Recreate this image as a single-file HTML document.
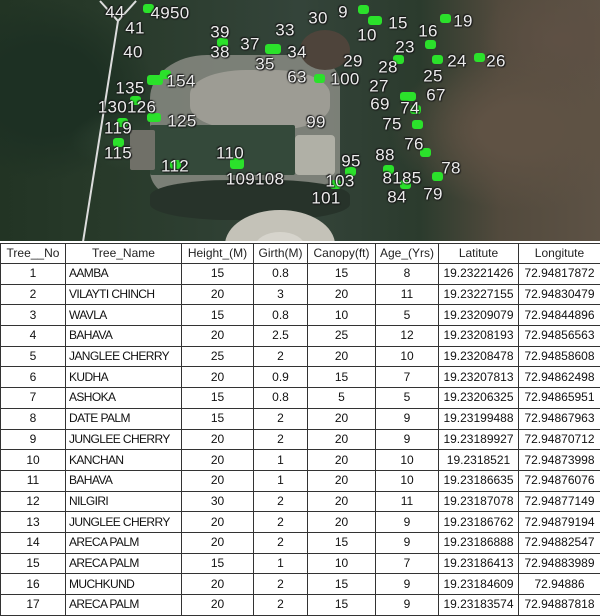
<!DOCTYPE html>
<html><head><meta charset="utf-8"><style>
body{margin:0;width:600px;height:600px;overflow:hidden;background:#fff;font-family:"Liberation Sans",sans-serif}
#map{position:absolute;left:0;top:0;width:600px;height:241px;overflow:hidden;
background:
radial-gradient(ellipse 60px 30px at 130px 140px,#2e4232,transparent),
radial-gradient(ellipse 110px 90px at 45px 90px,#1d3023 50%,transparent 100%),
radial-gradient(ellipse 130px 80px at 520px 130px,#5f5244 30%,transparent 100%),
radial-gradient(ellipse 80px 60px at 560px 40px,#5e5044,transparent),
linear-gradient(90deg,#223424 0,#283a2a 110px,#34443a 300px,#2b3b2d 420px,#524a3d 500px,#5d5245 600px);}
.d{position:absolute;border-radius:40%}
.l{position:absolute;color:#ececec;font-size:17px;line-height:17px;letter-spacing:.3px;transform:translate(-50%,-50%);white-space:nowrap;
text-shadow:0 0 2px #000,1px 1px 1px #222,-1px -1px 1px #222}
.g{position:absolute;background:#2be12b;width:11px;height:9px;border-radius:3px}
.r{position:absolute;height:2px;background:#ddd;transform-origin:0 50%}
table{position:absolute;top:243px;left:0;border-collapse:collapse;table-layout:fixed;width:600px;font-size:12px;color:#111}
td{border:1px solid #333;height:19.7px;padding:0;text-align:center;white-space:nowrap;overflow:hidden;line-height:19px}
td.n{text-align:left;letter-spacing:-.6px;padding-left:3px}
tr.h td{height:18px;color:#222}
</style></head><body>
<div id="map">
<div class="d" style="left:150px;top:55px;width:190px;height:145px;background:#8e9088;border-radius:30% 20% 10% 20%;opacity:.8"></div>
<div class="d" style="left:190px;top:70px;width:140px;height:60px;background:#9d9c94"></div>
<div class="d" style="left:150px;top:125px;width:145px;height:50px;background:#34493a;border-radius:2px"></div>
<div class="d" style="left:295px;top:135px;width:40px;height:40px;background:#b0b0a6;border-radius:4px"></div>
<div class="d" style="left:300px;top:30px;width:50px;height:40px;background:#4e443b;border-radius:50%"></div>
<div class="d" style="left:130px;top:130px;width:25px;height:40px;background:#707068;border-radius:2px"></div>
<div class="d" style="left:150px;top:180px;width:200px;height:40px;background:#27332a;border-radius:40%"></div>
<div class="d" style="left:225px;top:210px;width:110px;height:70px;background:#c4c2b8;border-radius:50%"></div>
<div class="d" style="left:255px;top:232px;width:50px;height:30px;background:#d6d4cc;border-radius:50%"></div>
<div class="r" style="left:118px;top:20px;width:223px;transform:rotate(99deg)"></div>
<div class="r" style="left:100px;top:0;width:27px;transform:rotate(48deg)"></div>
<div class="r" style="left:118px;top:20px;width:27px;transform:rotate(-48deg)"></div>
<div class="g" style="left:143px;top:4px"></div><div class="g" style="left:147px;top:75px;width:16px;height:10px"></div>
<div class="g" style="left:160px;top:70px"></div><div class="g" style="left:130px;top:96px"></div>
<div class="g" style="left:147px;top:113px;width:14px"></div><div class="g" style="left:113px;top:138px"></div>
<div class="g" style="left:117px;top:118px"></div><div class="g" style="left:230px;top:158px;width:14px;height:11px"></div>
<div class="g" style="left:170px;top:160px"></div><div class="g" style="left:265px;top:44px;width:16px;height:10px"></div>
<div class="g" style="left:217px;top:38px"></div><div class="g" style="left:314px;top:74px"></div>
<div class="g" style="left:358px;top:5px"></div><div class="g" style="left:368px;top:16px;width:14px"></div>
<div class="g" style="left:440px;top:14px"></div><div class="g" style="left:425px;top:40px"></div>
<div class="g" style="left:432px;top:55px"></div><div class="g" style="left:474px;top:53px"></div>
<div class="g" style="left:400px;top:92px;width:16px"></div><div class="g" style="left:412px;top:120px"></div>
<div class="g" style="left:420px;top:148px"></div><div class="g" style="left:383px;top:165px"></div>
<div class="g" style="left:432px;top:172px"></div><div class="g" style="left:400px;top:180px"></div>
<div class="g" style="left:330px;top:180px"></div><div class="g" style="left:345px;top:167px"></div>
<div class="g" style="left:393px;top:55px"></div><div class="g" style="left:410px;top:105px"></div>
<span class="l" style="left:115px;top:12px">44</span><span class="l" style="left:170px;top:13px">4950</span>
<span class="l" style="left:135px;top:28px">41</span><span class="l" style="left:133px;top:52px">40</span>
<span class="l" style="left:220px;top:32px">39</span><span class="l" style="left:220px;top:52px">38</span>
<span class="l" style="left:250px;top:44px">37</span><span class="l" style="left:285px;top:30px">33</span>
<span class="l" style="left:297px;top:52px">34</span><span class="l" style="left:265px;top:64px">35</span>
<span class="l" style="left:297px;top:77px">63</span><span class="l" style="left:130px;top:88px">135</span>
<span class="l" style="left:181px;top:81px">154</span><span class="l" style="left:127px;top:107px">130126</span>
<span class="l" style="left:182px;top:121px">125</span><span class="l" style="left:118px;top:128px">119</span>
<span class="l" style="left:118px;top:153px">115</span><span class="l" style="left:230px;top:153px">110</span>
<span class="l" style="left:175px;top:166px">112</span><span class="l" style="left:255px;top:179px">109108</span>
<span class="l" style="left:316px;top:122px">99</span>
<span class="l" style="left:318px;top:18px">30</span><span class="l" style="left:343px;top:12px">9</span>
<span class="l" style="left:367px;top:35px">10</span><span class="l" style="left:398px;top:23px">15</span>
<span class="l" style="left:428px;top:31px">16</span><span class="l" style="left:463px;top:21px">19</span>
<span class="l" style="left:405px;top:47px">23</span><span class="l" style="left:353px;top:61px">29</span>
<span class="l" style="left:388px;top:67px">28</span><span class="l" style="left:457px;top:61px">24</span>
<span class="l" style="left:496px;top:61px">26</span><span class="l" style="left:345px;top:79px">100</span>
<span class="l" style="left:379px;top:86px">27</span><span class="l" style="left:433px;top:76px">25</span>
<span class="l" style="left:436px;top:95px">67</span><span class="l" style="left:380px;top:104px">69</span>
<span class="l" style="left:410px;top:108px">74</span><span class="l" style="left:392px;top:124px">75</span>
<span class="l" style="left:414px;top:144px">76</span><span class="l" style="left:385px;top:155px">88</span>
<span class="l" style="left:351px;top:161px">95</span><span class="l" style="left:451px;top:168px">78</span>
<span class="l" style="left:402px;top:178px">8185</span><span class="l" style="left:340px;top:181px">103</span>
<span class="l" style="left:326px;top:198px">101</span><span class="l" style="left:397px;top:197px">84</span>
<span class="l" style="left:433px;top:194px">79</span>
</div>
<table>
<colgroup><col style="width:65px"><col style="width:116px"><col style="width:72px"><col style="width:54px"><col style="width:68px"><col style="width:63px"><col style="width:80px"><col style="width:82px"></colgroup>
<tr class="h"><td>Tree__No</td><td>Tree_Name</td><td>Height_(M)</td><td>Girth(M)</td><td>Canopy(ft)</td><td>Age_(Yrs)</td><td>Latitute</td><td>Longitute</td></tr>
<tr><td>1</td><td class="n">AAMBA</td><td>15</td><td>0.8</td><td>15</td><td>8</td><td>19.23221426</td><td>72.94817872</td></tr>
<tr><td>2</td><td class="n">VILAYTI CHINCH</td><td>20</td><td>3</td><td>20</td><td>11</td><td>19.23227155</td><td>72.94830479</td></tr>
<tr><td>3</td><td class="n">WAVLA</td><td>15</td><td>0.8</td><td>10</td><td>5</td><td>19.23209079</td><td>72.94844896</td></tr>
<tr><td>4</td><td class="n">BAHAVA</td><td>20</td><td>2.5</td><td>25</td><td>12</td><td>19.23208193</td><td>72.94856563</td></tr>
<tr><td>5</td><td class="n">JANGLEE CHERRY</td><td>25</td><td>2</td><td>20</td><td>10</td><td>19.23208478</td><td>72.94858608</td></tr>
<tr><td>6</td><td class="n">KUDHA</td><td>20</td><td>0.9</td><td>15</td><td>7</td><td>19.23207813</td><td>72.94862498</td></tr>
<tr><td>7</td><td class="n">ASHOKA</td><td>15</td><td>0.8</td><td>5</td><td>5</td><td>19.23206325</td><td>72.94865951</td></tr>
<tr><td>8</td><td class="n">DATE PALM</td><td>15</td><td>2</td><td>20</td><td>9</td><td>19.23199488</td><td>72.94867963</td></tr>
<tr><td>9</td><td class="n">JUNGLEE CHERRY</td><td>20</td><td>2</td><td>20</td><td>9</td><td>19.23189927</td><td>72.94870712</td></tr>
<tr><td>10</td><td class="n">KANCHAN</td><td>20</td><td>1</td><td>20</td><td>10</td><td>19.2318521</td><td>72.94873998</td></tr>
<tr><td>11</td><td class="n">BAHAVA</td><td>20</td><td>1</td><td>20</td><td>10</td><td>19.23186635</td><td>72.94876076</td></tr>
<tr><td>12</td><td class="n">NILGIRI</td><td>30</td><td>2</td><td>20</td><td>11</td><td>19.23187078</td><td>72.94877149</td></tr>
<tr><td>13</td><td class="n">JUNGLEE CHERRY</td><td>20</td><td>2</td><td>20</td><td>9</td><td>19.23186762</td><td>72.94879194</td></tr>
<tr><td>14</td><td class="n">ARECA PALM</td><td>20</td><td>2</td><td>15</td><td>9</td><td>19.23186888</td><td>72.94882547</td></tr>
<tr><td>15</td><td class="n">ARECA PALM</td><td>15</td><td>1</td><td>10</td><td>7</td><td>19.23186413</td><td>72.94883989</td></tr>
<tr><td>16</td><td class="n">MUCHKUND</td><td>20</td><td>2</td><td>15</td><td>9</td><td>19.23184609</td><td>72.94886</td></tr>
<tr><td>17</td><td class="n">ARECA PALM</td><td>20</td><td>2</td><td>15</td><td>9</td><td>19.23183574</td><td>72.94887818</td></tr>
</table>
</body></html>
